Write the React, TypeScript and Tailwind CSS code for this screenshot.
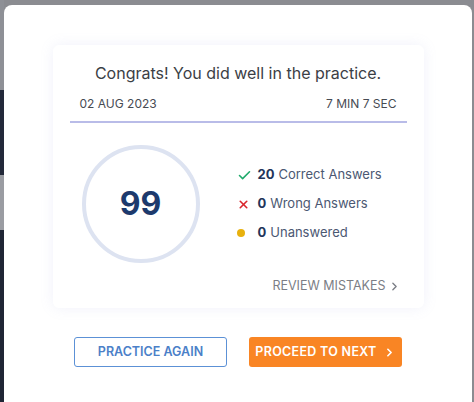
import { Check, ChevronRight, X } from "lucide-react";

const stats = [
  { count: 20, label: "Correct Answers", kind: "correct" },
  { count: 0, label: "Wrong Answers", kind: "wrong" },
  { count: 0, label: "Unanswered", kind: "skipped" },
];

function StatIcon({ kind }: { kind: string }) {
  if (kind === "correct") return <Check className="h-[15px] w-[15px] text-[#1faa6b]" strokeWidth={2.5} />;
  if (kind === "wrong") return <X className="h-[13px] w-[13px] text-[#d9262c]" strokeWidth={3} />;
  return <span className="block h-[8px] w-[8px] rounded-full bg-[#e8b10e]" />;
}

export default function App() {
  return (
    <div className="flex h-[402px] w-[474px] overflow-hidden bg-[#8b8c91] font-['Inter',sans-serif]">
      {/* backdrop strip on the left */}
      <div className="flex w-[4px] shrink-0 flex-col">
        <div className="h-[90px] bg-[#8e9096]" />
        <div className="h-[85px] bg-[#23293a]" />
        <div className="h-[55px] bg-[#9a9ca2]" />
        <div className="flex-1 bg-[#1f2535]" />
      </div>

      <div className="mt-[5px] mr-[2px] flex flex-1 flex-col items-center rounded-t-lg bg-white pt-[40px]">
        <div className="flex h-[263px] w-[371px] flex-col rounded-md bg-white px-[17px] pt-[17px] shadow-[0_0_14px_rgba(140,150,220,0.13)]">
          <h1 className="text-center text-[16px] leading-[22px] text-[#3b3e45]">
            Congrats! You did well in the practice.
          </h1>
          <div className="mt-[12px] flex justify-between border-b-2 border-[#b9bce8] px-[10px] pb-[9px] text-[12px] leading-[16px] text-[#474b53]">
            <span>02 AUG 2023</span>
            <span>7 MIN 7 SEC</span>
          </div>

          <div className="mt-[22px] flex items-center">
            <div className="ml-[12px] flex h-[118px] w-[118px] items-center justify-center rounded-full border-[4px] border-[#dde3f1]">
              <span className="text-[32px] font-bold leading-none text-[#1d3a6d]">99</span>
            </div>
            <ul className="ml-[37px] flex flex-col gap-[11px]">
              {stats.map((s) => (
                <li key={s.label} className="flex h-[18px] items-center text-[13px] text-[#4b5872]">
                  <span className="flex w-[21px] justify-start">
                    <StatIcon kind={s.kind} />
                  </span>
                  <span className="font-bold text-[#22345a]">{s.count}</span>
                  <span className="ml-[4px]">{s.label}</span>
                </li>
              ))}
            </ul>
          </div>

          <div className="mt-[17px] flex items-center justify-end pr-[6px] text-[12.5px] leading-none text-[#7b7e86]">
            <span>REVIEW MISTAKES</span>
            <ChevronRight className="ml-[2px] h-[13px] w-[13px]" strokeWidth={2.5} />
          </div>
        </div>

        <div className="mt-[29px] flex gap-[22px]">
          <button className="h-[30px] w-[153px] rounded-[3px] border border-[#5c91d6] text-[12.5px] font-semibold text-[#4b80c8]">
            PRACTICE AGAIN
          </button>
          <button className="flex h-[30px] w-[153px] items-center justify-center rounded-[3px] bg-[#f98524] text-[12.5px] font-semibold tracking-[0.3px] text-white">
            PROCEED TO NEXT
            <ChevronRight className="ml-[6px] h-[13px] w-[13px]" strokeWidth={3} />
          </button>
        </div>
      </div>
    </div>
  );
}
